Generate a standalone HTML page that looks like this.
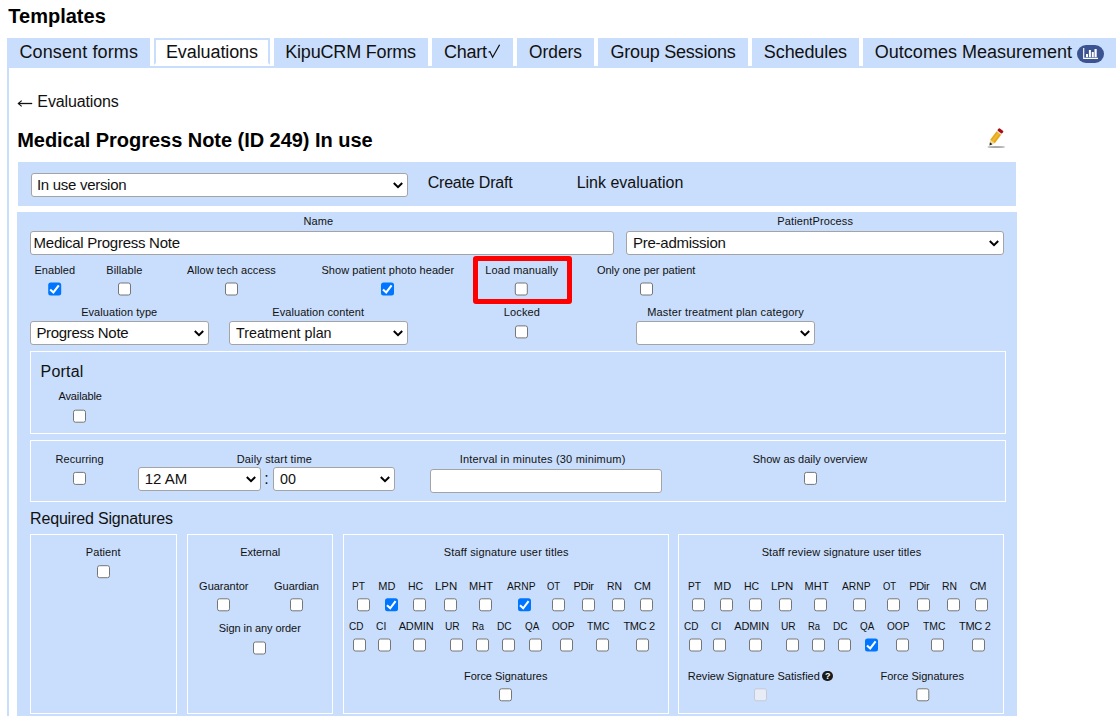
<!DOCTYPE html><html><head><meta charset="utf-8"><title>Templates</title><style>

html,body{margin:0;padding:0;background:#fff;}
body{width:1116px;height:716px;position:relative;overflow:hidden;font-family:"Liberation Sans",sans-serif;}
.b{position:absolute;background:#c9defc;}
.w{position:absolute;background:#fff;}
.t{position:absolute;white-space:nowrap;line-height:1;transform-origin:0 0;color:#111;}
.fs{position:absolute;border:1px solid #fff;box-sizing:border-box;}
.in{position:absolute;background:#fff;border:1px solid #a4a4a4;border-radius:3px;box-sizing:border-box;}
.cb{position:absolute;width:13px;height:13px;box-sizing:border-box;border:1px solid #767676;border-radius:2.5px;background:#fff;}
.cb.c{background:#0075ff;border-color:#0075ff;}
.cb.d{background:#e6ebf5;border-color:#c4c9d4;}
svg{position:absolute;overflow:visible;}

</style></head><body>
<div class="b" style="left:7px;top:38px;width:143px;height:28px"></div>
<div class="b" style="left:274px;top:38px;width:154px;height:28px"></div>
<div class="b" style="left:432px;top:38px;width:81px;height:28px"></div>
<div class="b" style="left:517px;top:38px;width:77px;height:28px"></div>
<div class="b" style="left:598px;top:38px;width:150px;height:28px"></div>
<div class="b" style="left:752px;top:38px;width:107px;height:28px"></div>
<div class="b" style="left:863px;top:38px;width:253px;height:28px"></div>
<div class="b" style="left:7px;top:66px;width:1109px;height:2px"></div>
<div style="position:absolute;left:154px;top:38px;width:116px;height:27px;box-sizing:border-box;background:#fff;border:2px solid #c9defc;border-bottom-color:#fff"></div>
<div class="b" style="left:7px;top:66px;width:2px;height:650px"></div>
<div class="b" style="left:18px;top:162px;width:998px;height:44px"></div>
<div class="b" style="left:17px;top:212px;width:1000px;height:504px"></div>
<div class="fs" style="left:30px;top:351px;width:976px;height:83px"></div>
<div class="fs" style="left:30px;top:440px;width:976px;height:62px"></div>
<div class="fs" style="left:30px;top:534px;width:147px;height:180px"></div>
<div class="fs" style="left:187px;top:534px;width:146px;height:180px"></div>
<div class="fs" style="left:343px;top:534px;width:326px;height:180px"></div>
<div class="fs" style="left:678px;top:534px;width:326px;height:180px"></div>
<div style="position:absolute;left:473px;top:256px;width:99px;height:48px;box-sizing:border-box;border:5px solid #f00;border-radius:3px"></div>
<div class="in" style="left:31px;top:173px;width:377px;height:24px"></div>
<svg style="left:393px;top:181.5px" width="10" height="7" viewBox="0 0 10 7"><path d="M0.8 1 L5 5.2 L9.2 1" fill="none" stroke="#000" stroke-width="2"/></svg>
<div class="in" style="left:30px;top:231px;width:584px;height:24px"></div>
<div class="in" style="left:626px;top:231px;width:378px;height:24px"></div>
<svg style="left:989px;top:239.5px" width="10" height="7" viewBox="0 0 10 7"><path d="M0.8 1 L5 5.2 L9.2 1" fill="none" stroke="#000" stroke-width="2"/></svg>
<div class="in" style="left:30px;top:321px;width:178.5px;height:24px"></div>
<svg style="left:193.5px;top:329.5px" width="10" height="7" viewBox="0 0 10 7"><path d="M0.8 1 L5 5.2 L9.2 1" fill="none" stroke="#000" stroke-width="2"/></svg>
<div class="in" style="left:229px;top:321px;width:178.5px;height:24px"></div>
<svg style="left:392.5px;top:329.5px" width="10" height="7" viewBox="0 0 10 7"><path d="M0.8 1 L5 5.2 L9.2 1" fill="none" stroke="#000" stroke-width="2"/></svg>
<div class="in" style="left:636px;top:321px;width:179px;height:24px"></div>
<svg style="left:800px;top:329.5px" width="10" height="7" viewBox="0 0 10 7"><path d="M0.8 1 L5 5.2 L9.2 1" fill="none" stroke="#000" stroke-width="2"/></svg>
<div class="in" style="left:138px;top:467px;width:123px;height:24px"></div>
<svg style="left:246px;top:475.5px" width="10" height="7" viewBox="0 0 10 7"><path d="M0.8 1 L5 5.2 L9.2 1" fill="none" stroke="#000" stroke-width="2"/></svg>
<div class="in" style="left:273px;top:467px;width:122px;height:24px"></div>
<svg style="left:379.5px;top:475.5px" width="10" height="7" viewBox="0 0 10 7"><path d="M0.8 1 L5 5.2 L9.2 1" fill="none" stroke="#000" stroke-width="2"/></svg>
<div class="in" style="left:430px;top:469px;width:232px;height:24px"></div>
<svg style="left:0;top:0" width="1116" height="716" viewBox="0 0 1116 716">
<rect x="48.2" y="282.5" width="13" height="13" rx="2.5" fill="#0075ff"/><path d="M50.2 289.5 l3.2 3 l5.4 -7.1" fill="none" stroke="#fff" stroke-width="2.1"/>
<rect x="118.5" y="283" width="12" height="12" rx="2" fill="#fff" stroke="#767676"/>
<rect x="225.5" y="283" width="12" height="12" rx="2" fill="#fff" stroke="#767676"/>
<rect x="381" y="282.5" width="13" height="13" rx="2.5" fill="#0075ff"/><path d="M383 289.5 l3.2 3 l5.4 -7.1" fill="none" stroke="#fff" stroke-width="2.1"/>
<rect x="515.3" y="283" width="12" height="12" rx="2" fill="#fff" stroke="#767676"/>
<rect x="640.5" y="283" width="12" height="12" rx="2" fill="#fff" stroke="#767676"/>
<rect x="515.5" y="325.9" width="12" height="12" rx="2" fill="#fff" stroke="#767676"/>
<rect x="73.5" y="410.2" width="12" height="12" rx="2" fill="#fff" stroke="#767676"/>
<rect x="73.5" y="472.4" width="12" height="12" rx="2" fill="#fff" stroke="#767676"/>
<rect x="804.5" y="472.4" width="12" height="12" rx="2" fill="#fff" stroke="#767676"/>
<rect x="97.5" y="565.7" width="12" height="12" rx="2" fill="#fff" stroke="#767676"/>
<rect x="217.5" y="598.8" width="12" height="12" rx="2" fill="#fff" stroke="#767676"/>
<rect x="290.5" y="598.8" width="12" height="12" rx="2" fill="#fff" stroke="#767676"/>
<rect x="253.5" y="642" width="12" height="12" rx="2" fill="#fff" stroke="#767676"/>
<rect x="357.5" y="598.8" width="12" height="12" rx="2" fill="#fff" stroke="#767676"/>
<rect x="385" y="598.3" width="13" height="13" rx="2.5" fill="#0075ff"/><path d="M387 605.3 l3.2 3 l5.4 -7.1" fill="none" stroke="#fff" stroke-width="2.1"/>
<rect x="413.5" y="598.8" width="12" height="12" rx="2" fill="#fff" stroke="#767676"/>
<rect x="444.5" y="598.8" width="12" height="12" rx="2" fill="#fff" stroke="#767676"/>
<rect x="479.5" y="598.8" width="12" height="12" rx="2" fill="#fff" stroke="#767676"/>
<rect x="518" y="598.3" width="13" height="13" rx="2.5" fill="#0075ff"/><path d="M520 605.3 l3.2 3 l5.4 -7.1" fill="none" stroke="#fff" stroke-width="2.1"/>
<rect x="552.5" y="598.8" width="12" height="12" rx="2" fill="#fff" stroke="#767676"/>
<rect x="582.5" y="598.8" width="12" height="12" rx="2" fill="#fff" stroke="#767676"/>
<rect x="612.5" y="598.8" width="12" height="12" rx="2" fill="#fff" stroke="#767676"/>
<rect x="640.5" y="598.8" width="12" height="12" rx="2" fill="#fff" stroke="#767676"/>
<rect x="353.5" y="639" width="12" height="12" rx="2" fill="#fff" stroke="#767676"/>
<rect x="378.5" y="639" width="12" height="12" rx="2" fill="#fff" stroke="#767676"/>
<rect x="413.5" y="639" width="12" height="12" rx="2" fill="#fff" stroke="#767676"/>
<rect x="450.5" y="639" width="12" height="12" rx="2" fill="#fff" stroke="#767676"/>
<rect x="476.5" y="639" width="12" height="12" rx="2" fill="#fff" stroke="#767676"/>
<rect x="502.5" y="639" width="12" height="12" rx="2" fill="#fff" stroke="#767676"/>
<rect x="529.5" y="639" width="12" height="12" rx="2" fill="#fff" stroke="#767676"/>
<rect x="560.5" y="639" width="12" height="12" rx="2" fill="#fff" stroke="#767676"/>
<rect x="596.5" y="639" width="12" height="12" rx="2" fill="#fff" stroke="#767676"/>
<rect x="636.5" y="639" width="12" height="12" rx="2" fill="#fff" stroke="#767676"/>
<rect x="692.5" y="598.8" width="12" height="12" rx="2" fill="#fff" stroke="#767676"/>
<rect x="720.5" y="598.8" width="12" height="12" rx="2" fill="#fff" stroke="#767676"/>
<rect x="749.5" y="598.8" width="12" height="12" rx="2" fill="#fff" stroke="#767676"/>
<rect x="779.5" y="598.8" width="12" height="12" rx="2" fill="#fff" stroke="#767676"/>
<rect x="814.5" y="598.8" width="12" height="12" rx="2" fill="#fff" stroke="#767676"/>
<rect x="853.5" y="598.8" width="12" height="12" rx="2" fill="#fff" stroke="#767676"/>
<rect x="887.5" y="598.8" width="12" height="12" rx="2" fill="#fff" stroke="#767676"/>
<rect x="917.5" y="598.8" width="12" height="12" rx="2" fill="#fff" stroke="#767676"/>
<rect x="947.5" y="598.8" width="12" height="12" rx="2" fill="#fff" stroke="#767676"/>
<rect x="975.5" y="598.8" width="12" height="12" rx="2" fill="#fff" stroke="#767676"/>
<rect x="689.5" y="639" width="12" height="12" rx="2" fill="#fff" stroke="#767676"/>
<rect x="713.5" y="639" width="12" height="12" rx="2" fill="#fff" stroke="#767676"/>
<rect x="749.5" y="639" width="12" height="12" rx="2" fill="#fff" stroke="#767676"/>
<rect x="786.5" y="639" width="12" height="12" rx="2" fill="#fff" stroke="#767676"/>
<rect x="812.5" y="639" width="12" height="12" rx="2" fill="#fff" stroke="#767676"/>
<rect x="838.5" y="639" width="12" height="12" rx="2" fill="#fff" stroke="#767676"/>
<rect x="865" y="638.5" width="13" height="13" rx="2.5" fill="#0075ff"/><path d="M867 645.5 l3.2 3 l5.4 -7.1" fill="none" stroke="#fff" stroke-width="2.1"/>
<rect x="896.5" y="639" width="12" height="12" rx="2" fill="#fff" stroke="#767676"/>
<rect x="931.5" y="639" width="12" height="12" rx="2" fill="#fff" stroke="#767676"/>
<rect x="972.5" y="639" width="12" height="12" rx="2" fill="#fff" stroke="#767676"/>
<rect x="499.5" y="688.8" width="12" height="12" rx="2" fill="#fff" stroke="#767676"/>
<rect x="754.5" y="688.8" width="12" height="12" rx="2" fill="#e7ecf6" stroke="#c3c9d6"/>
<rect x="916.8" y="688.8" width="12" height="12" rx="2" fill="#fff" stroke="#767676"/>
</svg>
<span class="t" id="t0" style="left:8.33px;top:6px;font-size:20px;font-weight:bold;color:#000;">Templates</span>
<span class="t" id="t1" style="left:19.44px;top:43px;font-size:18px;letter-spacing:0.118px;">Consent forms</span>
<span class="t" id="t2" style="left:165.97px;top:43px;font-size:18px;letter-spacing:-0.104px;">Evaluations</span>
<span class="t" id="t3" style="left:285.17px;top:43px;font-size:18px;letter-spacing:-0.174px;">KipuCRM Forms</span>
<span class="t" id="t4" style="left:443.94px;top:43px;font-size:18px;letter-spacing:-0.217px;">Chart</span>
<span class="t" id="t5" style="left:529.43px;top:43px;font-size:18px;transform:scaleX(0.9624);">Orders</span>
<span class="t" id="t6" style="left:610.54px;top:43px;font-size:18px;letter-spacing:-0.217px;">Group Sessions</span>
<span class="t" id="t7" style="left:763.83px;top:43px;font-size:18px;letter-spacing:-0.099px;">Schedules</span>
<span class="t" id="t8" style="left:874.80px;top:43px;font-size:18px;letter-spacing:0.011px;">Outcomes Measurement</span>
<span class="t" id="t9" style="left:37.34px;top:94px;font-size:16px;letter-spacing:-0.123px;">Evaluations</span>
<span class="t" id="t10" style="left:17.21px;top:130px;font-size:20px;font-weight:bold;color:#000;letter-spacing:-0.038px;">Medical Progress Note (ID 249) In use</span>
<span class="t" id="t11" style="left:427.64px;top:175px;font-size:16px;letter-spacing:-0.183px;">Create Draft</span>
<span class="t" id="t12" style="left:576.64px;top:175px;font-size:16px;">Link evaluation</span>
<span class="t" id="t13" style="left:303.45px;top:216px;font-size:11px;letter-spacing:0.149px;">Name</span>
<span class="t" id="t14" style="left:777.25px;top:216px;font-size:11px;letter-spacing:0.132px;">PatientProcess</span>
<span class="t" id="t15" style="left:34.45px;top:265px;font-size:11px;letter-spacing:0.039px;">Enabled</span>
<span class="t" id="t16" style="left:106.25px;top:265px;font-size:11px;letter-spacing:0.103px;">Billable</span>
<span class="t" id="t17" style="left:187.03px;top:265px;font-size:11px;letter-spacing:0.080px;">Allow tech access</span>
<span class="t" id="t18" style="left:321.45px;top:265px;font-size:11px;letter-spacing:0.049px;">Show patient photo header</span>
<span class="t" id="t19" style="left:485.35px;top:265px;font-size:11px;letter-spacing:0.088px;">Load manually</span>
<span class="t" id="t20" style="left:596.93px;top:265px;font-size:11px;letter-spacing:-0.036px;">Only one per patient</span>
<span class="t" id="t21" style="left:81.15px;top:307px;font-size:11px;letter-spacing:0.062px;">Evaluation type</span>
<span class="t" id="t22" style="left:272.25px;top:307px;font-size:11px;letter-spacing:0.075px;">Evaluation content</span>
<span class="t" id="t23" style="left:503.75px;top:307px;font-size:11px;letter-spacing:0.145px;">Locked</span>
<span class="t" id="t24" style="left:647.25px;top:307px;font-size:11px;letter-spacing:0.147px;">Master treatment plan category</span>
<span class="t" id="t25" style="left:40.54px;top:364px;font-size:16px;letter-spacing:0.217px;">Portal</span>
<span class="t" id="t26" style="left:58.43px;top:391px;font-size:11px;letter-spacing:-0.118px;">Available</span>
<span class="t" id="t27" style="left:55.55px;top:454px;font-size:11px;letter-spacing:0.053px;">Recurring</span>
<span class="t" id="t28" style="left:236.75px;top:454px;font-size:11px;letter-spacing:0.156px;">Daily start time</span>
<span class="t" id="t29" style="left:459.73px;top:454px;font-size:11px;letter-spacing:0.195px;">Interval in minutes (30 minimum)</span>
<span class="t" id="t30" style="left:752.75px;top:454px;font-size:11px;letter-spacing:0.011px;">Show as daily overview</span>
<span class="t" id="t31" style="left:264.19px;top:471px;font-size:16px;">:</span>
<span class="t" id="t32" style="left:30.04px;top:511px;font-size:16px;letter-spacing:-0.166px;">Required Signatures</span>
<span class="t" id="t33" style="left:85.75px;top:547px;font-size:11px;letter-spacing:0.105px;">Patient</span>
<span class="t" id="t34" style="left:240.15px;top:547px;font-size:11px;letter-spacing:-0.046px;">External</span>
<span class="t" id="t35" style="left:199.10px;top:581px;font-size:11px;letter-spacing:-0.012px;">Guarantor</span>
<span class="t" id="t36" style="left:274.10px;top:581px;font-size:11px;letter-spacing:-0.071px;">Guardian</span>
<span class="t" id="t37" style="left:218.85px;top:623px;font-size:11px;letter-spacing:-0.074px;">Sign in any order</span>
<span class="t" id="t38" style="left:443.75px;top:547px;font-size:11px;letter-spacing:0.151px;">Staff signature user titles</span>
<span class="t" id="t39" style="left:761.65px;top:547px;font-size:11px;letter-spacing:0.115px;">Staff review signature user titles</span>
<span class="t" id="t40" style="left:352.22px;top:581px;font-size:11px;transform:scaleX(0.9219);">PT</span>
<span class="t" id="t41" style="left:378.25px;top:581px;font-size:11px;letter-spacing:0.119px;">MD</span>
<span class="t" id="t42" style="left:407.99px;top:581px;font-size:11px;transform:scaleX(0.9541);">HC</span>
<span class="t" id="t43" style="left:435.31px;top:581px;font-size:11px;transform:scaleX(1.0404);">LPN</span>
<span class="t" id="t44" style="left:468.95px;top:581px;font-size:11px;letter-spacing:0.163px;">MHT</span>
<span class="t" id="t45" style="left:506.63px;top:581px;font-size:11px;transform:scaleX(0.9312);">ARNP</span>
<span class="t" id="t46" style="left:547.20px;top:581px;font-size:11px;transform:scaleX(0.8616);">OT</span>
<span class="t" id="t47" style="left:573.55px;top:581px;font-size:11px;letter-spacing:-0.302px;">PDir</span>
<span class="t" id="t48" style="left:606.80px;top:581px;font-size:11px;transform:scaleX(0.9438);">RN</span>
<span class="t" id="t49" style="left:634.09px;top:581px;font-size:11px;letter-spacing:-0.348px;">CM</span>
<span class="t" id="t50" style="left:348.54px;top:621px;font-size:11px;transform:scaleX(0.9051);">CD</span>
<span class="t" id="t51" style="left:375.63px;top:621px;font-size:11px;transform:scaleX(0.9336);">CI</span>
<span class="t" id="t52" style="left:398.63px;top:621px;font-size:11px;letter-spacing:-0.109px;">ADMIN</span>
<span class="t" id="t53" style="left:445.47px;top:621px;font-size:11px;transform:scaleX(0.9221);">UR</span>
<span class="t" id="t54" style="left:472.18px;top:621px;font-size:11px;transform:scaleX(0.8587);">Ra</span>
<span class="t" id="t55" style="left:497.22px;top:621px;font-size:11px;transform:scaleX(0.9197);">DC</span>
<span class="t" id="t56" style="left:524.68px;top:621px;font-size:11px;transform:scaleX(0.8982);">QA</span>
<span class="t" id="t57" style="left:551.87px;top:621px;font-size:11px;transform:scaleX(0.9164);">OOP</span>
<span class="t" id="t58" style="left:587.22px;top:621px;font-size:11px;transform:scaleX(0.9455);">TMC</span>
<span class="t" id="t59" style="left:623.40px;top:621px;font-size:11px;letter-spacing:-0.300px;">TMC 2</span>
<span class="t" id="t60" style="left:687.82px;top:581px;font-size:11px;transform:scaleX(0.9219);">PT</span>
<span class="t" id="t61" style="left:713.85px;top:581px;font-size:11px;letter-spacing:0.119px;">MD</span>
<span class="t" id="t62" style="left:743.59px;top:581px;font-size:11px;transform:scaleX(0.9541);">HC</span>
<span class="t" id="t63" style="left:770.91px;top:581px;font-size:11px;transform:scaleX(1.0404);">LPN</span>
<span class="t" id="t64" style="left:804.55px;top:581px;font-size:11px;letter-spacing:0.163px;">MHT</span>
<span class="t" id="t65" style="left:842.23px;top:581px;font-size:11px;transform:scaleX(0.9312);">ARNP</span>
<span class="t" id="t66" style="left:882.80px;top:581px;font-size:11px;transform:scaleX(0.8616);">OT</span>
<span class="t" id="t67" style="left:909.15px;top:581px;font-size:11px;letter-spacing:-0.302px;">PDir</span>
<span class="t" id="t68" style="left:942.40px;top:581px;font-size:11px;transform:scaleX(0.9438);">RN</span>
<span class="t" id="t69" style="left:969.69px;top:581px;font-size:11px;letter-spacing:-0.348px;">CM</span>
<span class="t" id="t70" style="left:684.14px;top:621px;font-size:11px;transform:scaleX(0.9051);">CD</span>
<span class="t" id="t71" style="left:711.23px;top:621px;font-size:11px;transform:scaleX(0.9336);">CI</span>
<span class="t" id="t72" style="left:734.23px;top:621px;font-size:11px;letter-spacing:-0.109px;">ADMIN</span>
<span class="t" id="t73" style="left:781.07px;top:621px;font-size:11px;transform:scaleX(0.9221);">UR</span>
<span class="t" id="t74" style="left:807.78px;top:621px;font-size:11px;transform:scaleX(0.8587);">Ra</span>
<span class="t" id="t75" style="left:832.82px;top:621px;font-size:11px;transform:scaleX(0.9197);">DC</span>
<span class="t" id="t76" style="left:860.28px;top:621px;font-size:11px;transform:scaleX(0.8982);">QA</span>
<span class="t" id="t77" style="left:887.47px;top:621px;font-size:11px;transform:scaleX(0.9164);">OOP</span>
<span class="t" id="t78" style="left:922.82px;top:621px;font-size:11px;transform:scaleX(0.9455);">TMC</span>
<span class="t" id="t79" style="left:959.00px;top:621px;font-size:11px;letter-spacing:-0.300px;">TMC 2</span>
<span class="t" id="t80" style="left:463.95px;top:671px;font-size:11px;letter-spacing:-0.018px;">Force Signatures</span>
<span class="t" id="t81" style="left:687.75px;top:671px;font-size:11px;letter-spacing:0.026px;">Review Signature Satisfied</span>
<span class="t" id="t82" style="left:880.45px;top:671px;font-size:11px;letter-spacing:-0.018px;">Force Signatures</span>
<span class="t" id="t83" style="left:36.97px;top:177px;font-size:15px;letter-spacing:-0.295px;">In use version</span>
<span class="t" id="t84" style="left:33.62px;top:235px;font-size:15px;letter-spacing:-0.267px;">Medical Progress Note</span>
<span class="t" id="t85" style="left:632.92px;top:235px;font-size:15px;letter-spacing:-0.239px;">Pre-admission</span>
<span class="t" id="t86" style="left:36.42px;top:325px;font-size:15px;letter-spacing:-0.307px;">Progress Note</span>
<span class="t" id="t87" style="left:236.13px;top:325px;font-size:15px;transform:scaleX(0.9524);">Treatment plan</span>
<span class="t" id="t88" style="left:144.71px;top:471px;font-size:15px;letter-spacing:-0.015px;">12 AM</span>
<span class="t" id="t89" style="left:279.89px;top:471px;font-size:15px;transform:scaleX(0.9539);">00</span>
<!-- outcomes chart badge -->
<div style="position:absolute;left:1077px;top:45px;width:27px;height:18px;border-radius:9px;background:#3b5391"></div>
<svg style="left:1083px;top:48px" width="15" height="11" viewBox="0 0 15 11"><path d="M0.7 0 V10.3 H15" fill="none" stroke="#fff" stroke-width="1.15"/><rect x="3" y="6" width="2" height="3.2" fill="#fff"/><rect x="5.9" y="2" width="2" height="7.2" fill="#fff"/><rect x="8.8" y="4" width="2" height="5.2" fill="#fff"/><rect x="11.5" y="1" width="2.2" height="8.2" fill="#fff"/></svg>
<!-- back arrow -->
<svg style="left:17px;top:99px" width="16" height="9" viewBox="0 0 16 9"><path d="M1.2 4.5 H15.2" fill="none" stroke="#111" stroke-width="1.3"/><path d="M4.7 1.6 L1.3 4.5 L4.7 7.4" fill="none" stroke="#111" stroke-width="1.1"/></svg>
<!-- pencil -->
<svg style="left:984px;top:124px" width="24" height="26" viewBox="0 0 24 26">
<ellipse cx="12.2" cy="23" rx="8.8" ry="1" fill="#9a9a9a" opacity="0.85"/>
<g transform="translate(5.5,21.4) rotate(-53)">
<polygon points="0,0 5,-2.9 5,2.9" fill="#f3dca0"/>
<polygon points="0,0 2.8,-1.6 2.8,1.6" fill="#1c1c1c"/>
<rect x="5" y="-2.9" width="10.6" height="5.8" fill="#e8a81c"/>
<rect x="5" y="-1" width="10.6" height="2" fill="#f1ba34"/>
<rect x="15.6" y="-2.9" width="1" height="5.8" fill="#dfe6ec"/>
<rect x="16.6" y="-2.9" width="3.2" height="5.8" rx="1" fill="#a80d12"/>
</g></svg>
<!-- question icon -->
<div style="position:absolute;left:822.3px;top:670.8px;width:10.4px;height:10.4px;border-radius:50%;background:#1a1a1a"></div>
<span style="position:absolute;left:825px;top:671.6px;font:bold 9px/1 'Liberation Sans',sans-serif;color:#fff">?</span>
<!-- chart check -->
<svg style="left:488px;top:44px" width="13" height="15" viewBox="0 0 13 15"><path d="M0.5 8.3 L1.9 7.6 L4.6 13.2 L11.6 0.8" fill="none" stroke="#111" stroke-width="1.25" stroke-linejoin="miter"/></svg>

</body></html>
